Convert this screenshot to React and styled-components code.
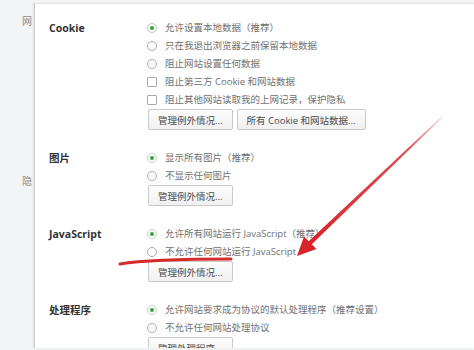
import React from "react";
import styled, { createGlobalStyle } from "styled-components";

const GlobalStyle = createGlobalStyle`
    html, body {
        margin: 0;
        padding: 0;
        background: #f3f4f6;
    }
    body {
        font-family: "Open Sans", "Noto Sans CJK SC", sans-serif;
    }
`;

const sections = [
    {
        title: "Cookie",
        options: [
            { type: "radio", checked: true, text: "允许设置本地数据（推荐）" },
            { type: "radio", text: "只在我退出浏览器之前保留本地数据" },
            { type: "radio", text: "阻止网站设置任何数据" },
            { type: "check", text: "阻止第三方 Cookie 和网站数据" },
            { type: "check", text: "阻止其他网站读取我的上网记录，保护隐私" },
        ],
        buttons: ["管理例外情况...", "所有 Cookie 和网站数据..."],
    },
    {
        title: "图片",
        options: [
            { type: "radio", checked: true, text: "显示所有图片（推荐）" },
            { type: "radio", text: "不显示任何图片" },
        ],
        buttons: ["管理例外情况..."],
    },
    {
        title: "JavaScript",
        options: [
            { type: "radio", checked: true, text: "允许所有网站运行 JavaScript（推荐）" },
            { type: "radio", text: "不允许任何网站运行 JavaScript" },
        ],
        buttons: ["管理例外情况..."],
    },
    {
        title: "处理程序",
        options: [
            { type: "radio", checked: true, text: "允许网站要求成为协议的默认处理程序（推荐设置）" },
            { type: "radio", text: "不允许任何网站处理协议" },
        ],
        buttons: ["管理处理程序..."],
    },
];

const App = () => {
    return (
        <>
            <GlobalStyle />
            <Page>
                <Sidebar>
                    <SideLabel>网</SideLabel>
                    <SideLabel $gap={148}>隐</SideLabel>
                </Sidebar>
                <Panel>
                    {sections.map((s) => (
                        <Section key={s.title}>
                            <Title>{s.title}</Title>
                            <Options>
                                {s.options.map((o) => (
                                    <Option key={o.text}>
                                        {o.type === "radio" ? (
                                            <Radio $checked={o.checked} />
                                        ) : (
                                            <Check />
                                        )}
                                        <OptionText>{o.text}</OptionText>
                                    </Option>
                                ))}
                                <Buttons>
                                    {s.buttons.map((b) => (
                                        <Button key={b}>{b}</Button>
                                    ))}
                                </Buttons>
                            </Options>
                        </Section>
                    ))}
                </Panel>
                <Annotation viewBox="0 0 474 350" width="474" height="350">
                    <defs>
                        <linearGradient id="fade" x1="442" y1="117" x2="310" y2="243" gradientUnits="userSpaceOnUse">
                            <stop offset="0" stopColor="#d8232a" stopOpacity="0.15" />
                            <stop offset="0.25" stopColor="#d8232a" stopOpacity="0.8" />
                            <stop offset="1" stopColor="#d8232a" />
                        </linearGradient>
                    </defs>
                    <polygon points="441.6,116.6 442.4,117.4 311.6,244.6 308.4,241.4" fill="url(#fade)" />
                    <polygon points="297,256 304,236.5 316.5,249" fill="#d8232a" />
                    <path d="M120 264 Q 150 259 231 259" stroke="#d42a2a" strokeWidth="3" strokeLinecap="round" fill="none" />
                </Annotation>
            </Page>
        </>
    );
};

export default App;

const Page = styled.div`
    position: relative;
    display: flex;
    width: 474px;
    height: 350px;
    overflow: hidden;
    background: #f3f4f6;
`;

const Sidebar = styled.div`
    width: 34px;
    flex: none;
    overflow: hidden;
    padding-top: 15px;
    box-sizing: border-box;
    display: flex;
    flex-direction: column;
`;

const SideLabel = styled.div`
    padding-left: 22px;
    margin-top: ${(p) => p.$gap || 0}px;
    white-space: nowrap;
    font-family: "Noto Sans CJK SC", sans-serif;
    font-size: 10px;
    line-height: 12px;
    color: #8a8a8a;
`;

const Panel = styled.div`
    flex: 1;
    margin-top: 3px;
    height: 345px;
    box-sizing: border-box;
    background: #ffffff;
    border-left: 1px solid #c6c6c6;
    border-top: 1px solid #e8e8e8;
    box-shadow: -1px 0 2px rgba(0, 0, 0, 0.08);
    padding: 15px 0 0 14px;
    display: flex;
    flex-direction: column;
    gap: 19px;
    overflow: hidden;
`;

const Section = styled.div`
    display: grid;
    grid-template-columns: 98px 1fr;
`;

const Title = styled.div`
    font-size: 10.5px;
    font-weight: bold;
    line-height: 18px;
    color: #333333;
`;

const Options = styled.div`
    display: flex;
    flex-direction: column;
`;

const Option = styled.div`
    display: flex;
    align-items: center;
    height: 18px;
    gap: 8px;
`;

const Radio = styled.span`
    width: 10px;
    height: 10px;
    flex: none;
    box-sizing: border-box;
    border-radius: 50%;
    border: 1px solid ${(p) => (p.$checked ? "#b5d3b5" : "#a9a9a9")};
    background: #ffffff;
    display: flex;
    align-items: center;
    justify-content: center;
    &::after {
        content: "";
        width: 4px;
        height: 4px;
        border-radius: 50%;
        background: ${(p) => (p.$checked ? "#35a035" : "transparent")};
    }
`;

const Check = styled.span`
    width: 10px;
    height: 10px;
    flex: none;
    box-sizing: border-box;
    border: 1px solid #a9a9a9;
    border-radius: 1px;
    background: #ffffff;
`;

const OptionText = styled.span`
    font-size: 9.5px;
    line-height: 12px;
    color: #707070;
    white-space: nowrap;
`;

const Buttons = styled.div`
    display: flex;
    gap: 4px;
    padding-left: 1px;
`;

const Button = styled.button`
    height: 21px;
    padding: 0 9px;
    font-family: "Open Sans", "Noto Sans CJK SC", sans-serif;
    font-size: 9.5px;
    color: #4a4a4a;
    border: 1px solid #c9c9c9;
    border-radius: 2px;
    background: linear-gradient(#fdfdfd, #f0f0f0);
    white-space: nowrap;
`;

const Annotation = styled.svg`
    position: absolute;
    left: 0;
    top: 0;
    pointer-events: none;
`;
